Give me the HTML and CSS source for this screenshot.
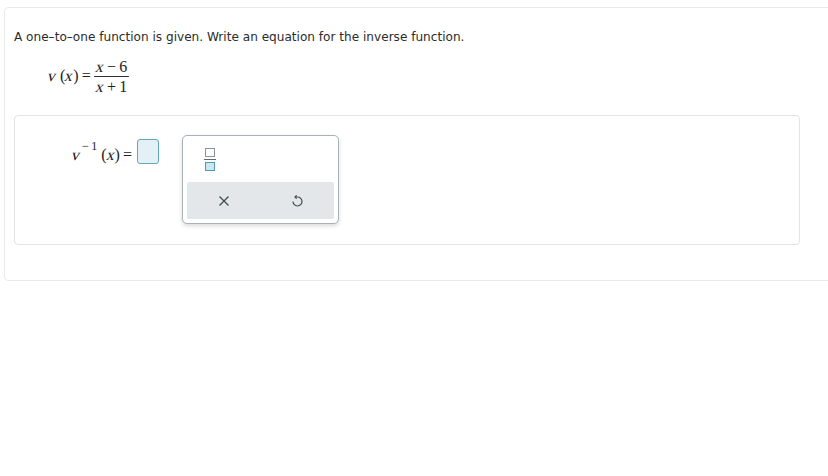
FILE: index.html
```html
<!DOCTYPE html>
<html lang="en">
<head>
  <meta charset="UTF-8">
  <title>Inverse function</title>
  <link rel="stylesheet" href="styles.css">
</head>
<body>
  <div class="question-card">
    <p class="prompt">A one&ndash;to&ndash;one function is given. Write an equation for the inverse function.</p>

    <div class="given">
      <span class="math"><i class="var">v</i>&nbsp;(<i class="var">x</i>)&thinsp;=</span>
      <span class="frac">
        <span class="num"><i class="var">x</i>&thinsp;&minus;&thinsp;6</span>
        <span class="den"><i class="var">x</i>&thinsp;+&thinsp;1</span>
      </span>
    </div>

    <div class="answer-box">
      <div class="answer-row">
        <span class="math lhs"><i class="var">v</i><sup>&minus;&thinsp;1</sup>&nbsp;(<i class="var">x</i>)&thinsp;=</span>
        <span class="blank"></span>

        <div class="palette">
          <div class="palette-keys">
            <button class="key-frac" title="fraction">
              <span class="sq top"></span>
              <span class="bar"></span>
              <span class="sq bottom"></span>
            </button>
          </div>
          <div class="palette-actions">
            <button class="act" title="clear">
              <svg width="12" height="12" viewBox="0 0 12 12"><path d="M1.5 1.5 L10.5 10.5 M10.5 1.5 L1.5 10.5" stroke="#3f4d55" stroke-width="1.3" fill="none"/></svg>
            </button>
            <button class="act" title="undo">
              <svg width="13" height="13" viewBox="0 0 13 13"><path d="M6.5 3 A4.5 4.5 0 1 1 2 7.5" stroke="#3f4d55" stroke-width="1.2" fill="none"/><path d="M6.5 3 L4.2 3 M5.6 1.4 L4 3 L5.6 4.6" stroke="#3f4d55" stroke-width="1.2" fill="none"/></svg>
            </button>
          </div>
        </div>
      </div>
    </div>
  </div>
</body>
</html>
```

FILE: styles.css
```css
* {
  box-sizing: border-box;
}

html, body {
  margin: 0;
  padding: 0;
  background: #fff;
  overflow: hidden;
}

body {
  font-family: "DejaVu Sans", Verdana, sans-serif;
  color: #2b2b2b;
}

.question-card {
  margin: 7px 0 0 4px;
  width: 840px;
  height: 274px;
  border: 1px solid #e9e9e9;
  border-radius: 4px;
  padding: 21px 0 0 9px;
}

.prompt {
  margin: 0;
  font-size: 12.1px;
  line-height: 17px;
}

.math,
.frac {
  font-family: "Liberation Serif", "Times New Roman", serif;
  font-size: 16px;
  color: #222;
}

/* no italic face installed, so slant the letters by hand */
.var {
  display: inline-block;
  font-style: normal;
  transform: skewX(-14deg);
}

.given {
  display: flex;
  align-items: center;
  margin: 10px 0 0 34px;
  height: 40px;
}

.frac {
  display: inline-flex;
  flex-direction: column;
  align-items: center;
  margin-left: 3px;
}

.frac .num {
  padding: 0 2px 1px;
  border-bottom: 1px solid #333;
  line-height: 17px;
}

.frac .den {
  padding: 1px 2px 0;
  line-height: 17px;
}

.answer-box {
  margin-top: 19px;
  width: 786px;
  height: 130px;
  border: 1px solid #e3e3e3;
  border-radius: 4px;
  padding: 19px 0 0 57px;
}

.answer-row {
  display: flex;
  align-items: flex-start;
}

.lhs {
  margin-top: 6px;
  line-height: 18px;
}

.lhs sup {
  font-size: 12px;
  position: relative;
  top: -4px;
  margin-left: 2px;
}

.blank {
  width: 22px;
  height: 25px;
  margin: 4px 0 0 5px;
  background: #e3f1f6;
  border: 1.5px solid #62a6b7;
  border-radius: 3px;
}

.palette {
  margin-left: 23px;
  width: 157px;
  height: 89px;
  background: #fff;
  border: 1px solid #a9b2b7;
  border-radius: 5px;
  box-shadow: 0 2px 4px rgba(0, 0, 0, 0.15);
  padding: 0 4px 4px;
  display: flex;
  flex-direction: column;
}

.palette-keys {
  height: 46px;
  display: flex;
  align-items: center;
  padding-left: 17px;
}

.key-frac {
  background: none;
  border: none;
  padding: 0;
  display: flex;
  flex-direction: column;
  align-items: center;
  width: 12px;
}

.key-frac .sq {
  width: 10px;
  height: 9px;
  border: 1px solid #8a9499;
}

.key-frac .sq.bottom {
  background: #c9e8f2;
  border-color: #4e9cb3;
}

.key-frac .bar {
  width: 12px;
  height: 1px;
  background: #5f6a70;
  margin: 2px 0;
}

.palette-actions {
  flex: 1;
  background: #e3e7ea;
  border-radius: 2px;
  display: flex;
}

.act {
  flex: 1;
  background: none;
  border: none;
  padding: 0;
  display: flex;
  align-items: center;
  justify-content: center;
}
```
